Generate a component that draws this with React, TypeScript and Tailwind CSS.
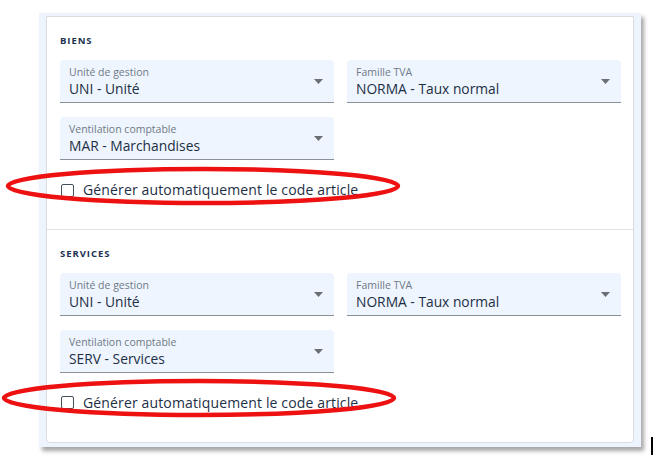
import React from 'react'

const font = { fontFamily: '"Open Sans", "Noto Sans", sans-serif' }

function SelectField({ label, value }: { label: string; value: string }) {
  return (
    <div className="relative h-[43px] rounded-t-[4px] bg-[#eef5fe] border-b border-[#8b9097] pl-[9px] pr-[12px] pt-[6px] flex flex-col">
      <span className="text-[10.5px] leading-[13px] text-[#6f7a86]">{label}</span>
      <span className="text-[13.8px] leading-[18px] mt-[1px] text-[#1d2f45]">{value}</span>
      <svg className="absolute right-[11px] top-[19px]" width="9" height="5" viewBox="0 0 9 5">
        <path d="M0 0 L9 0 L4.5 5 Z" fill="#6b6f74" />
      </svg>
    </div>
  )
}

function Section({ title, vent }: { title: string; vent: string }) {
  return (
    <div className="h-[214px] pt-[18px] pl-[13px] pr-[12px]">
      <div className="text-[9.5px] leading-[12px] font-bold tracking-[0.1em] text-[#1b3150]">{title}</div>
      <div className="grid grid-cols-2 gap-[13px] mt-[13px]">
        <SelectField label="Unité de gestion" value="UNI - Unité" />
        <SelectField label="Famille TVA" value="NORMA - Taux normal" />
      </div>
      <div className="grid grid-cols-2 gap-[13px] mt-[14px]">
        <SelectField label="Ventilation comptable" value={vent} />
      </div>
      <label className="flex items-center gap-[9px] mt-[20px] h-[20px] pl-[1px]">
        <span className="w-[13px] h-[13px] rounded-[2px] border-[1.5px] border-[#44505c] bg-white" />
        <span className="text-[14px] leading-[18px] tracking-[0.01em] text-[#1d2f45]">Générer automatiquement le code article</span>
      </label>
    </div>
  )
}

export default function App() {
  return (
    <div className="relative w-[654px] h-[461px] bg-white overflow-hidden" style={font}>
      <div className="ml-[39px] mt-[13px] w-[602px] h-[434px] bg-[#edf4fd] px-[7px] pt-[3px] pb-[4px] shadow-[3px_4px_4px_rgba(0,0,0,0.35)]">
        <div className="h-full bg-white border border-[#d9dde2] rounded-b-[4px] flex flex-col">
          <Section title="BIENS" vent="MAR - Marchandises" />
          <div className="h-px bg-[#e0e3e7]" />
          <Section title="SERVICES" vent="SERV - Services" />
        </div>
      </div>

      <svg className="absolute left-0 top-0 pointer-events-none" width="654" height="461">
        <ellipse cx="203" cy="186" rx="195" ry="17" fill="none" stroke="#ee1111" strokeWidth="4.5" />
        <ellipse cx="199" cy="398" rx="195" ry="17" fill="none" stroke="#ee1111" strokeWidth="4.5" />
      </svg>
      <div className="absolute left-[651px] top-[437px] w-[2px] h-[18px] bg-black" />
    </div>
  )
}
